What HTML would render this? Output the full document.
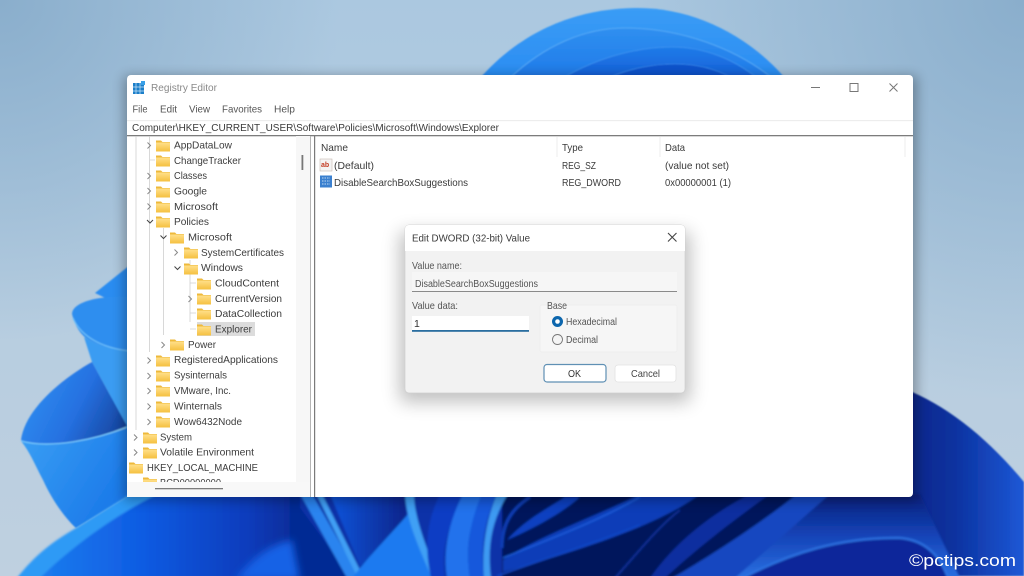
<!DOCTYPE html>
<html><head><meta charset="utf-8"><style>
html,body{margin:0;padding:0;width:1024px;height:576px;overflow:hidden;background:#a9c5dc}
svg{display:block}
text{font-family:"Liberation Sans",sans-serif;font-size:10.5px;fill:#3a3a3a}
.t text{fill:#3c3c3c}
</style></head><body>
<svg width="1024" height="576" viewBox="0 0 1024 576" xmlns="http://www.w3.org/2000/svg">
<defs>
<linearGradient id="bgv" x1="0" y1="0" x2="0" y2="1"><stop offset="0" stop-color="#abc8e0"/><stop offset=".5" stop-color="#b6cde0"/><stop offset="1" stop-color="#bfd0e0"/></linearGradient>
<radialGradient id="cl" gradientUnits="userSpaceOnUse" cx="0" cy="0" r="340"><stop offset="0" stop-color="#8aaecc"/><stop offset="1" stop-color="#8aaecc" stop-opacity="0"/></radialGradient>
<radialGradient id="cr" gradientUnits="userSpaceOnUse" cx="1024" cy="0" r="400"><stop offset="0" stop-color="#8aaecc"/><stop offset="1" stop-color="#8aaecc" stop-opacity="0"/></radialGradient>
<linearGradient id="top1" x1="0" x2="0" y1="0" y2="1"><stop offset="0" stop-color="#3a9cf5"/><stop offset="1" stop-color="#2a8cf2"/></linearGradient>
<linearGradient id="top2" x1="0" x2="0" y1="0" y2="1"><stop offset="0" stop-color="#2f8ff0"/><stop offset="1" stop-color="#1f7ae8"/></linearGradient>
<linearGradient id="top3" x1="0" x2="0" y1="0" y2="1"><stop offset="0" stop-color="#1f7be8"/><stop offset="1" stop-color="#1560d8"/></linearGradient>
<linearGradient id="p2" x1="0" x2="1" y1=".3" y2=".7"><stop offset="0" stop-color="#2f90f2"/><stop offset=".55" stop-color="#2570e0"/><stop offset="1" stop-color="#16459f"/></linearGradient>
<linearGradient id="c3" x1="0" x2="1" y1="0" y2=".6"><stop offset="0" stop-color="#3aa0f5"/><stop offset="1" stop-color="#1a78e8"/></linearGradient>
<linearGradient id="bl" gradientUnits="userSpaceOnUse" x1="40" y1="0" x2="300" y2="0"><stop offset="0" stop-color="#1b7cee"/><stop offset=".4" stop-color="#0f5be2"/><stop offset=".8" stop-color="#0a3cbc"/><stop offset="1" stop-color="#062a94"/></linearGradient>
<linearGradient id="rt" gradientUnits="userSpaceOnUse" x1="905" y1="0" x2="1024" y2="0"><stop offset="0" stop-color="#08268a"/><stop offset=".4" stop-color="#0b319e"/><stop offset="1" stop-color="#1d58d6"/></linearGradient>
<linearGradient id="band" x1="0" x2="0" y1="0" y2="1"><stop offset="0" stop-color="#07207c"/><stop offset=".5" stop-color="#1544b8"/><stop offset="1" stop-color="#2a70e2"/></linearGradient>
<linearGradient id="fade" gradientUnits="userSpaceOnUse" x1="330" y1="0" x2="405" y2="0"><stop offset="0" stop-color="#0f55dc"/><stop offset="1" stop-color="#07258c"/></linearGradient>
<linearGradient id="fo" x1="0" x2="0" y1="0" y2="1"><stop offset="0" stop-color="#ffe08a"/><stop offset="1" stop-color="#f5c040"/></linearGradient>
<filter id="sh" x="-10%" y="-10%" width="120%" height="120%"><feGaussianBlur stdDeviation="6"/></filter>
<filter id="sh2" x="-20%" y="-20%" width="140%" height="140%"><feGaussianBlur stdDeviation="9"/></filter>
<filter id="soft"><feGaussianBlur stdDeviation=".7"/></filter>
<filter id="soft2" x="-5%" y="-20%" width="110%" height="140%"><feGaussianBlur stdDeviation="1"/></filter>
<filter id="wide" x="-30%" y="-30%" width="160%" height="160%"><feGaussianBlur stdDeviation="4"/></filter>
<filter id="tb" x="-2%" y="-2%" width="104%" height="104%"><feGaussianBlur stdDeviation=".3"/></filter>
<symbol id="f" viewBox="0 0 14 13" width="14" height="13" overflow="visible"><path d="M0 1.500h5l1.500 1.500H14v9.500H0z" fill="#eeb93a"/><rect x="0" y="3.500" width="14" height="9" fill="url(#fo)"/></symbol>
</defs>

<!-- wallpaper -->
<rect width="1024" height="576" fill="url(#bgv)"/>
<rect width="1024" height="576" fill="url(#cl)"/>
<rect width="1024" height="576" fill="url(#cr)"/>
<g filter="url(#soft)">
<path d="M480 78C530 22 590 8 638 8C690 8 745 32 785 78Z" fill="url(#top1)"/>
<path d="M510 78C545 45 585 28 625 28C680 28 735 48 772 78Z" fill="url(#top2)" stroke="#5cb0f8" stroke-width=".7"/>
<path d="M563 78C600 56 640 47 672 47C705 47 735 60 757 78Z" fill="url(#top3)" stroke="#4aa0f5" stroke-width=".6"/>
<path d="M608 78C630 68 655 64 675 64C700 64 718 70 732 78Z" fill="#0f52cc" stroke="#3f95f2" stroke-width=".6"/>
<!-- left petals -->
<path d="M130 265L95 293L130 310Z" fill="#2a8cf0"/>
<path d="M84 337C98 346 112 349 130 351V432H127L110 395L92 362Z" fill="#3a9cf2"/>
<path d="M130 297C100 295 72 302 72 314C74 322 78 332 86 338C98 346 112 349 130 351Z" fill="#2f8eef"/>
<path d="M73 318C80 335 100 348 130 351" fill="none" stroke="#6cc0fa" stroke-width="1.200"/>
<path d="M92 362C60 380 25 410 21 440C45 452 95 440 127 426L110 395Z" fill="url(#p2)"/>
<path d="M21 441C30 452 35 465 43 480C52 500 65 518 76 528L130 495V427C95 440 50 450 21 441Z" fill="url(#c3)"/>
<path d="M21 441C50 449 95 440 127 427" fill="none" stroke="#72c4fa" stroke-width="1.300"/>
<!-- right upper -->
<path d="M905 389C945 405 985 435 1024 482V576H905Z" fill="url(#rt)"/>
</g>
<g filter="url(#soft2)">
<!-- bottom base -->
<rect x="280" y="494" width="560" height="84" fill="#04185c"/>
<path d="M17 578C35 555 52 542 76 528L130 494H310V578Z" fill="#2f9af5"/>
<path d="M40 578C70 548 115 515 158 494H304V578Z" fill="url(#bl)"/>
<!-- middle -->
<rect x="300" y="494" width="202" height="84" fill="#0a32a8"/>
<path d="M290 494L352 578H290Z" fill="#062a94"/>
<path d="M330 494H406V530L360 566L345 530Z" fill="url(#fade)"/>
<path d="M300 494H312L360 578H347Z" fill="#2a84ef"/>
<path d="M316 494H322L364 578H358Z" fill="#3f9ff5"/>
<path d="M408 494C410 510 418 540 433 578H352C370 555 390 535 410 512Z" fill="#1f7af0"/>
<path d="M405 494H414C414 520 430 555 438 578H432C420 550 406 520 405 494Z" fill="#3fa0f5"/>
<path d="M440 494C425 525 425 550 431 578H445C440 545 450 520 468 494Z" fill="#0a3cc4"/>
<path d="M463 494C447 525 443 555 447 578H470C465 545 470 520 485 494Z" fill="#2272ec"/>
<path d="M482 494C468 525 466 555 470 578H484C480 545 485 520 497 494Z" fill="#1558dc"/>
<path d="M497 494C484 525 482 555 484 578H491C487 545 492 520 508 494Z" fill="#3c9af2"/>
<!-- dark streak area -->
<path d="M503 560C540 535 600 515 640 494H700C660 525 580 550 503 572Z" fill="#0c3cb8"/>
<path d="M503 558C560 535 600 520 640 497" fill="none" stroke="#1f62e2" stroke-width="1.300"/>
<path d="M497 576C540 560 590 545 640 525" fill="none" stroke="#1648c8" stroke-width="1.500"/>
<path d="M530 497C510 510 502 525 502 548" fill="none" stroke="#0e3eb6" stroke-width="3"/>
<path d="M507 540C525 520 545 510 565 497H580C560 515 530 530 507 540Z" fill="#0d40c0"/>
<path d="M615 578C640 550 660 525 680 510" fill="none" stroke="#0c2f94" stroke-width="2"/>
<path d="M650 578C670 550 700 520 750 494H770C720 530 690 555 665 578Z" fill="#0b2f9f"/>
<path d="M672 578C712 555 765 520 797 494H835C800 525 770 555 742 578Z" fill="#1546c0"/>
<path d="M735 578L830 494H920L960 578Z" fill="url(#band)"/>
<path d="M743 578C790 553 840 537 900 538C925 540 940 556 948 578Z" fill="#07259a"/>
<path d="M743 578C790 553 840 537 900 538C925 540 940 556 948 578" fill="none" stroke="#2d74e4" stroke-width="2"/>
</g>
<path d="M235 580C255 555 270 545 292 540L300 580Z" fill="#1662e6" filter="url(#wide)"/>

<!-- window -->
<rect x="124" y="76" width="793" height="425" fill="#000" opacity=".3" filter="url(#sh)"/>
<rect x="127" y="75" width="786" height="422" rx="4" fill="#fff"/>
<g filter="url(#tb)">
<rect x="127" y="120" width="786" height="1.200" fill="#ededed"/>
<rect x="127" y="135" width="786" height="1.300" fill="#7c7c7c"/>
<!-- title icon -->
<rect x="133" y="83" width="11" height="11" fill="#1b7fc9"/>
<path d="M136 83v11M140 83v11M133 87h11M133 91h11" stroke="#c8e4f8" stroke-width=".7"/>
<rect x="141" y="81" width="4" height="4" fill="#38a0e8"/>
<text x="151" y="91" style="fill:#8a8a8a" textLength="66" lengthAdjust="spacingAndGlyphs">Registry Editor</text>
<path d="M811 87.500h9" stroke="#777" stroke-width="1"/>
<rect x="850" y="83.500" width="8" height="8" fill="none" stroke="#777" stroke-width="1"/>
<path d="M889.500 83.500l8 8M897.500 83.500l-8 8" stroke="#777" stroke-width="1"/>
<text x="132.500" y="112.500" style="fill:#555" textLength="15" lengthAdjust="spacingAndGlyphs">File</text>
<text x="160" y="112.500" style="fill:#555" textLength="17" lengthAdjust="spacingAndGlyphs">Edit</text>
<text x="189" y="112.500" style="fill:#555" textLength="21" lengthAdjust="spacingAndGlyphs">View</text>
<text x="222" y="112.500" style="fill:#555" textLength="40" lengthAdjust="spacingAndGlyphs">Favorites</text>
<text x="274" y="112.500" style="fill:#555" textLength="21" lengthAdjust="spacingAndGlyphs">Help</text>
<text x="132" y="131" textLength="367" lengthAdjust="spacingAndGlyphs">Computer\HKEY_CURRENT_USER\Software\Policies\Microsoft\Windows\Explorer</text>

<!-- tree pane -->
<rect x="296" y="136" width="14" height="361" fill="#f7f7f7"/>
<rect x="310" y="136" width="1" height="361" fill="#b5b5b5"/>
<rect x="314" y="136" width="1.200" height="361" fill="#7a7a7a"/>
<rect x="301.500" y="155" width="1.800" height="15" fill="#777"/>
<g stroke="#cfcfcf" stroke-width=".8" fill="none">
<path d="M136 136V430"/><path d="M149.500 136V352"/><path d="M163.500 228V335"/><path d="M190 260V322"/><path d="M150 160h5M190 283h6M190 313h6M190 329h6"/>
</g>
<g class="t">
<text x="174" y="148.500" textLength="58" lengthAdjust="spacingAndGlyphs">AppDataLow</text>
<text x="174" y="164" textLength="67" lengthAdjust="spacingAndGlyphs">ChangeTracker</text>
<text x="174" y="179" textLength="33" lengthAdjust="spacingAndGlyphs">Classes</text>
<text x="174" y="194.500" textLength="33" lengthAdjust="spacingAndGlyphs">Google</text>
<text x="174" y="210" textLength="44" lengthAdjust="spacingAndGlyphs">Microsoft</text>
<text x="174" y="225" textLength="35" lengthAdjust="spacingAndGlyphs">Policies</text>
<text x="188" y="240.500" textLength="44" lengthAdjust="spacingAndGlyphs">Microsoft</text>
<text x="201" y="256" textLength="83" lengthAdjust="spacingAndGlyphs">SystemCertificates</text>
<text x="201" y="271" textLength="42" lengthAdjust="spacingAndGlyphs">Windows</text>
<text x="215" y="286.500" textLength="64" lengthAdjust="spacingAndGlyphs">CloudContent</text>
<text x="215" y="302" textLength="67" lengthAdjust="spacingAndGlyphs">CurrentVersion</text>
<text x="215" y="317" textLength="67" lengthAdjust="spacingAndGlyphs">DataCollection</text>
<rect x="197" y="322" width="58" height="14" fill="#dcdcdc"/>
<text x="215" y="332.500" textLength="37" lengthAdjust="spacingAndGlyphs">Explorer</text>
<text x="188" y="348" textLength="28" lengthAdjust="spacingAndGlyphs">Power</text>
<text x="174" y="363" textLength="104" lengthAdjust="spacingAndGlyphs">RegisteredApplications</text>
<text x="174" y="378.500" textLength="53" lengthAdjust="spacingAndGlyphs">Sysinternals</text>
<text x="174" y="394" textLength="57" lengthAdjust="spacingAndGlyphs">VMware, Inc.</text>
<text x="174" y="409.500" textLength="48" lengthAdjust="spacingAndGlyphs">Winternals</text>
<text x="174" y="425" textLength="68" lengthAdjust="spacingAndGlyphs">Wow6432Node</text>
<text x="160" y="440.500" textLength="32" lengthAdjust="spacingAndGlyphs">System</text>
<text x="160" y="455.500" textLength="94" lengthAdjust="spacingAndGlyphs">Volatile Environment</text>
<text x="147" y="471" textLength="111" lengthAdjust="spacingAndGlyphs">HKEY_LOCAL_MACHINE</text>
<text x="160" y="486" textLength="61" lengthAdjust="spacingAndGlyphs">BCD00000000</text>
</g>
<use href="#f" x="156" y="139"/><use href="#f" x="156" y="154"/><use href="#f" x="156" y="169"/><use href="#f" x="156" y="185"/><use href="#f" x="156" y="200"/><use href="#f" x="156" y="215"/>
<use href="#f" x="170" y="231"/><use href="#f" x="184" y="246"/><use href="#f" x="184" y="262"/>
<use href="#f" x="197" y="277"/><use href="#f" x="197" y="292"/><use href="#f" x="197" y="307"/><use href="#f" x="197" y="323"/>
<use href="#f" x="170" y="338"/>
<use href="#f" x="156" y="354"/><use href="#f" x="156" y="369"/><use href="#f" x="156" y="384"/><use href="#f" x="156" y="400"/><use href="#f" x="156" y="415"/>
<use href="#f" x="143" y="431"/><use href="#f" x="143" y="446"/><use href="#f" x="129" y="461"/><use href="#f" x="143" y="476"/>
<rect x="127" y="482" width="183" height="15" fill="#f8f8f8"/>
<rect x="155" y="488" width="68" height="1.300" fill="#7c7c7c"/>
<g fill="none" stroke="#888" stroke-width="1">
<path d="M147.500 142.500l3 3-3 3M147.500 173l3 3-3 3M147.500 188l3 3-3 3M147.500 203.500l3 3-3 3"/>
<path d="M147 220l3 3 3-3M160.500 235.500l3 3 3-3M174.500 266.500l3 3 3-3" stroke="#444"/>
<path d="M174.500 249.500l3 3-3 3M188.500 296l3 3-3 3M161.500 342l3 3-3 3"/>
<path d="M147.500 357.500l3 3-3 3M147.500 373l3 3-3 3M147.500 388l3 3-3 3M147.500 403.500l3 3-3 3M147.500 419l3 3-3 3"/>
<path d="M134 434.500l3 3-3 3M134 449.500l3 3-3 3"/>
</g>

<!-- right pane -->
<g stroke="#ececec" stroke-width="1"><path d="M557 137V157M660 137V157M905 137V157"/></g>
<text x="321" y="151" textLength="27" lengthAdjust="spacingAndGlyphs">Name</text>
<text x="562" y="151" textLength="21" lengthAdjust="spacingAndGlyphs">Type</text>
<text x="665" y="151" textLength="20" lengthAdjust="spacingAndGlyphs">Data</text>
<rect x="320" y="159" width="12" height="12" fill="#f4f4f4" stroke="#c9b8b0" stroke-width=".6"/>
<text x="321" y="167" style="font-size:7px;fill:#c23a22;font-weight:bold">ab</text>
<text x="334" y="169" textLength="40" lengthAdjust="spacingAndGlyphs">(Default)</text>
<rect x="320" y="175.500" width="12" height="12" fill="#3a80cf"/>
<path d="M322 178h8M322 181h8M322 184h8" stroke="#bcd8f2" stroke-width="1" stroke-dasharray="1.500 1"/>
<text x="334" y="186" textLength="134" lengthAdjust="spacingAndGlyphs">DisableSearchBoxSuggestions</text>
<text x="562" y="169" textLength="34" lengthAdjust="spacingAndGlyphs">REG_SZ</text>
<text x="562" y="186" textLength="59" lengthAdjust="spacingAndGlyphs">REG_DWORD</text>
<text x="665" y="169" textLength="64" lengthAdjust="spacingAndGlyphs">(value not set)</text>
<text x="665" y="186" textLength="66" lengthAdjust="spacingAndGlyphs">0x00000001 (1)</text>
</g>

<!-- dialog -->
<rect x="400" y="232" width="290" height="170" fill="#000" opacity=".25" filter="url(#sh2)"/>
<g filter="url(#tb)">
<rect x="405" y="225" width="280" height="168" rx="4" fill="#f2f2f2" stroke="#cfcfcf" stroke-width=".7"/>
<path d="M405 251V229a4 4 0 0 1 4-4h272a4 4 0 0 1 4 4v22Z" fill="#fff"/>
<text x="412" y="241.500" textLength="118" lengthAdjust="spacingAndGlyphs">Edit DWORD (32-bit) Value</text>
<path d="M668 233l8.500 8.500M676.500 233l-8.500 8.500" stroke="#444" stroke-width="1.100"/>
<text x="412" y="269" textLength="50" lengthAdjust="spacingAndGlyphs" style="fill:#555">Value name:</text>
<rect x="412" y="272" width="265" height="19" fill="#f6f6f6"/>
<rect x="412" y="291" width="265" height="1" fill="#8a8a8a"/>
<text x="415" y="287" textLength="123" lengthAdjust="spacingAndGlyphs" style="fill:#555;font-size:10px">DisableSearchBoxSuggestions</text>
<text x="412" y="309" textLength="46" lengthAdjust="spacingAndGlyphs" style="fill:#555">Value data:</text>
<rect x="412" y="316" width="117" height="15" fill="#fff"/>
<rect x="412" y="330" width="117" height="1.800" fill="#2a6ea0"/>
<text x="414" y="327" style="fill:#333">1</text>
<rect x="540" y="305" width="137" height="47" rx="2" fill="#f6f6f6" stroke="#ececec" stroke-width=".7"/>
<text x="547" y="309" textLength="20" lengthAdjust="spacingAndGlyphs" style="fill:#555">Base</text>
<circle cx="557.500" cy="321.500" r="5.500" fill="#0a66ad"/><circle cx="557.500" cy="321.500" r="2.300" fill="#fff"/>
<text x="566" y="325" textLength="51" lengthAdjust="spacingAndGlyphs" style="fill:#555;font-size:10px">Hexadecimal</text>
<circle cx="557.500" cy="339.500" r="5" fill="#f4f4f4" stroke="#777" stroke-width=".9"/>
<text x="566" y="343" textLength="32" lengthAdjust="spacingAndGlyphs" style="fill:#555;font-size:10px">Decimal</text>
<rect x="544" y="364.500" width="62" height="17.500" rx="3" fill="#fff" stroke="#5f90b4" stroke-width="1.200"/>
<text x="568" y="377" textLength="13" lengthAdjust="spacingAndGlyphs" style="fill:#333">OK</text>
<rect x="615" y="365" width="61" height="17" rx="3" fill="#fff" stroke="#e2e2e2" stroke-width=".8"/>
<text x="631" y="377" textLength="29" lengthAdjust="spacingAndGlyphs" style="fill:#444">Cancel</text>
</g>

<!-- watermark -->
<text x="909" y="566" textLength="107" lengthAdjust="spacingAndGlyphs" style="font-size:17px;fill:#fff">©pctips.com</text>
</svg>
</body></html>
